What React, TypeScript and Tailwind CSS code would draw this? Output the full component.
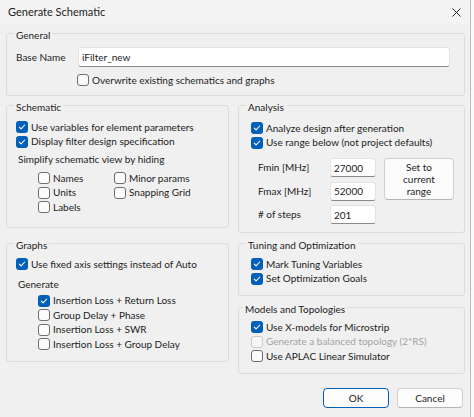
import React from 'react';

function Check({ checked = false, disabled = false }: { checked?: boolean; disabled?: boolean }) {
  if (checked) {
    return (
      <span className="w-[12px] h-[12px] rounded-[3px] bg-[#005fb8] flex items-center justify-center shrink-0">
        <svg width="8" height="8" viewBox="0 0 8 8">
          <path d="M1.3 4.2 L3.1 5.9 L6.7 2" stroke="white" strokeWidth="1.1" fill="none" strokeLinecap="round" strokeLinejoin="round" />
        </svg>
      </span>
    );
  }
  return (
    <span
      className={
        disabled
          ? 'w-[12px] h-[12px] rounded-[3px] border border-[#c9c9c9] bg-[#f6f6f6] shrink-0'
          : 'w-[12px] h-[12px] rounded-[3px] border border-[#6e6e6e] bg-[#fbfbfb] shrink-0'
      }
    />
  );
}

function CheckRow({
  label,
  checked,
  disabled,
  className = '',
}: {
  label: string;
  checked?: boolean;
  disabled?: boolean;
  className?: string;
}) {
  return (
    <div className={`flex items-center gap-[3px] h-[14.5px] whitespace-nowrap ${className}`}>
      <Check checked={checked} disabled={disabled} />
      <span className={disabled ? 'text-[#a3a3a3]' : ''}>{label}</span>
    </div>
  );
}

function Group({
  title,
  className = '',
  legendClass = '',
  children,
}: {
  title: string;
  className?: string;
  legendClass?: string;
  children: React.ReactNode;
}) {
  return (
    <fieldset className={`border border-[#dcdcdc] rounded-[3px] px-[7px] min-w-0 ${className}`}>
      <legend className={`px-[2px] pt-[4px] leading-[14px] ${legendClass}`}>{title}</legend>
      {children}
    </fieldset>
  );
}

function Field({ value, className = '' }: { value: string; className?: string }) {
  return (
    <input
      readOnly
      defaultValue={value}
      className={`bg-white border border-[#e3e3e3] border-b-[#8a8a8a] rounded-[3px] pl-[3px] outline-none ${className}`}
    />
  );
}

export default function App() {
  return (
    <div className="w-[474px] h-[417px] bg-[#fafafa] font-['Lato',sans-serif] text-[10px] text-[#1c1c1c]">
      <div className="w-[471px] h-full bg-[#f0f0f0] border-r border-[#bcbcbc] flex flex-col">
        {/* title bar */}
        <div className="h-[24px] flex items-center justify-between pl-[8px] pr-[9px] bg-[#f3f3f3]">
          <span className="text-[11px]">Generate Schematic</span>
          <svg width="9" height="9" viewBox="0 0 9 9">
            <path d="M0.5 0.5 L8.5 8.5 M8.5 0.5 L0.5 8.5" stroke="#222" strokeWidth="1" />
          </svg>
        </div>

        <div className="pl-[6px] pr-[5px] flex flex-col">
          {/* General */}
          <Group title="General" className="h-[72px]">
            <div className="flex items-center mt-[5px]">
              <span className="w-[64px] pl-[2px]">Base Name</span>
              <Field value="iFilter_new" className="w-[372px] h-[20px]" />
            </div>
            <CheckRow className="mt-[6px] ml-[63px]" label="Overwrite existing schematics and graphs" />
          </Group>

          <div className="flex gap-[9px]">
            <div className="w-[223px] flex flex-col">
              <Group title="Schematic" className="h-[132px]">
                <CheckRow className="mt-[6px] ml-[2px]" checked label="Use variables for element parameters" />
                <CheckRow className="ml-[2px]" checked label="Display filter design specification" />
                <div className="mt-[3px] ml-[4px] leading-[14px]">Simplify schematic view by hiding</div>
                <div className="grid grid-cols-[76px_auto] mt-[5px] ml-[24px]">
                  <CheckRow label="Names" />
                  <CheckRow label="Minor params" />
                  <CheckRow label="Units" />
                  <CheckRow label="Snapping Grid" />
                  <CheckRow label="Labels" />
                </div>
              </Group>

              <Group title="Graphs" className="h-[128px] mt-[6px]">
                <CheckRow className="mt-[5px] ml-[2px]" checked label="Use fixed axis settings instead of Auto" />
                <div className="mt-[5px] ml-[4px] leading-[14px]">Generate</div>
                <div className="flex flex-col mt-[3px] ml-[24px]">
                  <CheckRow checked label="Insertion Loss + Return Loss" />
                  <CheckRow label="Group Delay  + Phase" />
                  <CheckRow label="Insertion Loss + SWR" />
                  <CheckRow label="Insertion Loss + Group Delay" />
                </div>
              </Group>
            </div>

            <div className="w-[227px] flex flex-col">
              <Group title="Analysis" className="h-[137px]">
                <CheckRow className="mt-[7px] ml-[5px]" checked label="Analyze design after generation" />
                <CheckRow className="ml-[5px]" checked label="Use range below (not project defaults)" />
                <div className="flex mt-[8px]">
                  <div className="ml-[12px] flex flex-col gap-[4.5px]">
                    <div className="flex items-center">
                      <span className="w-[72px]">Fmin [MHz]</span>
                      <Field value="27000" className="w-[46px] h-[19px]" />
                    </div>
                    <div className="flex items-center">
                      <span className="w-[72px]">Fmax [MHz]</span>
                      <Field value="52000" className="w-[46px] h-[19px]" />
                    </div>
                    <div className="flex items-center">
                      <span className="w-[72px]"># of steps</span>
                      <Field value="201" className="w-[46px] h-[19px]" />
                    </div>
                  </div>
                  <button className="ml-[8px] w-[70px] h-[42px] bg-[#fbfbfb] border border-[#d0d0d0] border-b-[#b5b5b5] rounded-[4px] leading-[12px] text-center">
                    Set to
                    <br />
                    current
                    <br />
                    range
                  </button>
                </div>
              </Group>

              <Group title="Tuning and Optimization" className="h-[62px] mt-[1px]">
                <CheckRow className="mt-[5px] ml-[5px]" checked label="Mark Tuning Variables" />
                <CheckRow className="ml-[5px]" checked label="Set Optimization Goals" />
              </Group>

              <Group title="Models and Topologies" legendClass="-ml-[3px]" className="h-[76px] mt-[2px]">
                <CheckRow className="mt-[4px] ml-[5px]" checked label="Use X-models for Microstrip" />
                <CheckRow className="ml-[5px]" disabled label="Generate a balanced topology (2*RS)" />
                <CheckRow className="ml-[5px]" label="Use APLAC Linear Simulator" />
              </Group>
            </div>
          </div>

          {/* buttons */}
          <div className="flex justify-end gap-[8px] mt-[14px] pr-[2px]">
            <button className="w-[66px] h-[20px] bg-[#fdfdfd] border border-[#005fb8] rounded-[4px]">OK</button>
            <button className="w-[66px] h-[20px] bg-[#fdfdfd] border border-[#d0d0d0] border-b-[#b5b5b5] rounded-[4px]">
              Cancel
            </button>
          </div>
        </div>
      </div>
    </div>
  );
}
